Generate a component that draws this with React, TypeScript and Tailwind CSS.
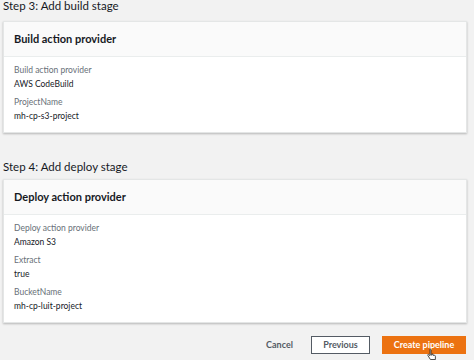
import React from "react";

type Field = { label: string; value: string };

function Card({ title, fields }: { title: string; fields: Field[] }) {
  return (
    <div className="bg-white border border-[#e4e6e6] shadow-[0_1px_2px_rgba(0,0,0,0.25)]">
      <div className="h-[35px] flex items-center px-[10px] bg-[#fafafa] border-b border-[#eaeded]">
        <span className="text-[11px] font-bold text-[#16191f]">{title}</span>
      </div>
      <div className="px-[10px] pt-[6px] pb-[9px] flex flex-col gap-[4px]">
        {fields.map((f) => (
          <div key={f.label}>
            <div className="text-[8.5px] leading-[14px] text-[#687078]">{f.label}</div>
            <div className="text-[8.5px] leading-[14px] text-[#16191f]">{f.value}</div>
          </div>
        ))}
      </div>
    </div>
  );
}

function Cursor() {
  return (
    <svg className="absolute left-[427px] top-[348px]" width="10" height="13" viewBox="0 0 10 13">
      <path
        d="M3 1.5v6.2L1.8 6.6c-.6-.5-1.4 0-1 .7l2.6 4.2h5V8.3c0-.6-.4-1-1-1H6V6.2c0-.4-.9-.4-.9 0V7H4V1.5c0-.7-1-.7-1 0z"
        fill="#fff"
        stroke="#222"
        strokeWidth="0.8"
      />
    </svg>
  );
}

export default function App() {
  return (
    <div
      className="relative w-[474px] h-[360px] overflow-hidden bg-[#f2f2f2] pl-[3px] pr-[7px]"
      style={{ fontFamily: "Lato, 'Open Sans', sans-serif" }}
    >
      <div className="-mt-[3px] h-[18px] leading-[18px] text-[11.5px] text-[#16191f]">Step 3: Add build stage</div>
      <div className="mt-[6px]">
        <Card
          title="Build action provider"
          fields={[
            { label: "Build action provider", value: "AWS CodeBuild" },
            { label: "ProjectName", value: "mh-cp-s3-project" },
          ]}
        />
      </div>
      <div className="mt-[25px] h-[18px] leading-[18px] text-[11.5px] text-[#16191f]">Step 4: Add deploy stage</div>
      <div className="mt-[3px]">
        <Card
          title="Deploy action provider"
          fields={[
            { label: "Deploy action provider", value: "Amazon S3" },
            { label: "Extract", value: "true" },
            { label: "BucketName", value: "mh-cp-luit-project" },
          ]}
        />
      </div>
      <div className="mt-[13px] flex justify-end items-center pr-[1px]">
        <button className="text-[9px] font-bold text-[#545b64] mr-[18px]">Cancel</button>
        <button className="h-[18px] w-[59px] bg-white border border-[#545b64] text-[9px] font-bold text-[#545b64] mr-[12px]">
          Previous
        </button>
        <button className="h-[18px] w-[84px] bg-[#ec7211] text-[9px] font-bold text-white">Create pipeline</button>
      </div>
      <Cursor />
    </div>
  );
}
